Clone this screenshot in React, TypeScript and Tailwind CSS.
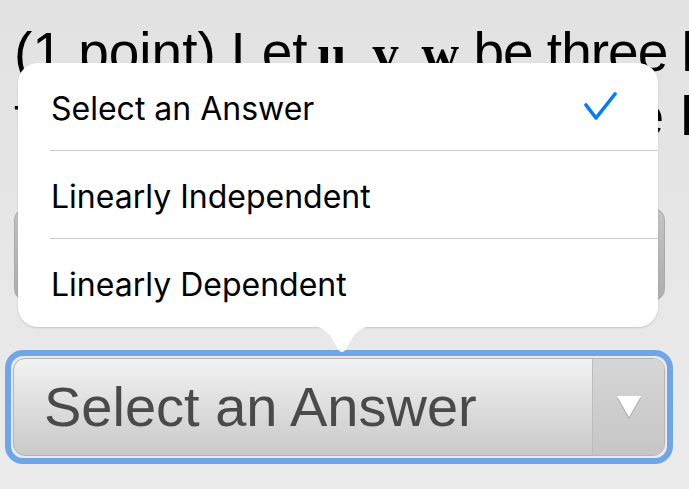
import React from "react";

export default function App() {
  const items = ["Select an Answer", "Linearly Independent", "Linearly Dependent"];
  return (
    <div className="relative w-[689px] h-[489px] overflow-hidden bg-gradient-to-b from-[#e2e2e2] to-[#ebebeb]">
      <div className="pl-[14px] pt-[21px]">
        <p
          className="text-[55px] leading-[63px] text-black whitespace-nowrap"
          style={{ fontFamily: '"Liberation Sans", Arial, sans-serif' }}
        >
          (1 point) Let
          <b className="ml-[10px] text-[52px]" style={{ fontFamily: '"Liberation Serif", "Times New Roman", serif' }}>u, v, w</b>
          <span className="tracking-[-1px]"> be three l</span>
          <br />
          <span className="[word-spacing:1px]">that are the space. Are the l</span>
        </p>
        <div className="mt-[60px] mr-[24px] h-[93px] rounded-[12px] border border-[#a9a9a9] bg-gradient-to-b from-[#c4c4c4] to-[#adadad]" />
        <div className="mt-[49px] ml-[-9px] mr-[16px] rounded-[18px] border-[6px] border-[#6ea6e8] p-[2px]">
          <div className="flex h-[98px] rounded-[12px] border border-[#b5b5b5] bg-gradient-to-b from-[#f2f2f2] to-[#c9c9c9] overflow-hidden">
            <div
              className="flex-1 flex items-center pl-[30px] text-[56px] text-[#4a4a4a]"
              style={{ fontFamily: '"Liberation Sans", Arial, sans-serif' }}
            >
              Select an Answer
            </div>
            <div className="w-[72px] border-l border-[#bcbcbc] bg-gradient-to-b from-[#d6d6d6] to-[#c6c6c6] flex items-center justify-center">
              <svg width="26" height="24" viewBox="0 0 26 24">
                <polygon points="1,3 25,3 13,24" fill="#9a9a9a" opacity="0.6" />
                <polygon points="1,1 25,1 13,22" fill="#ffffff" />
              </svg>
            </div>
          </div>
        </div>
      </div>

      {/* Popover */}
      <div className="absolute left-[18px] top-[63px] w-[640px]">
        <div className="rounded-[20px] bg-white shadow-[0_1px_2px_rgba(0,0,0,0.15)]">
          {items.map((t, i) => (
            <div key={t} className="relative flex items-center h-[88px] pl-[33px] pr-[40px]">
              <span
                className="flex-1 pt-[3px] text-[32px] text-black"
                style={{ fontFamily: 'Inter, "Noto Sans", sans-serif' }}
              >
                {t}
              </span>
              {i === 0 && (
                <svg width="34" height="32" viewBox="0 0 34 32" className="mt-[2px]">
                  <polyline points="2,13 12,26 31,2" fill="none" stroke="#007aff" strokeWidth="3.6" strokeLinecap="round" strokeLinejoin="round" />
                </svg>
              )}
              {i < items.length - 1 && (
                <div className="absolute left-[32px] right-0 bottom-0 h-px bg-[#c8c7cc]" />
              )}
            </div>
          ))}
        </div>
        <svg className="absolute left-[289px] top-[263px]" width="70" height="28" viewBox="0 0 70 28">
          <path d="M0,0 C12,0 17,2 24,11 L31,23 C33,27 37,27 39,23 L46,11 C53,2 58,0 70,0 Z" fill="#ffffff" />
        </svg>
      </div>
    </div>
  );
}
